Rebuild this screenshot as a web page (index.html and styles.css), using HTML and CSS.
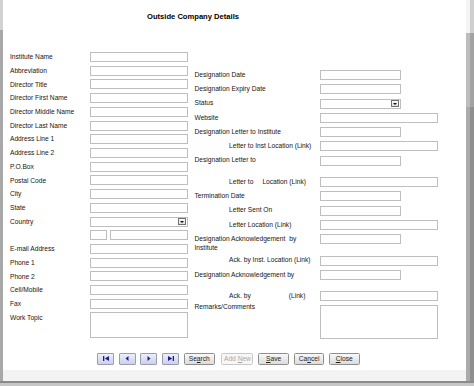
FILE: index.html
```html
<!DOCTYPE html>
<html>
<head>
<meta charset="utf-8">
<link rel="stylesheet" href="styles.css">
</head>
<body>
<div class="window">
  <div class="lborder"></div>
  <div class="content">
    <div class="title">Outside Company Details</div>
    <div class="form">
      <div class="left">
        <div class="lrow"><span class="lbl">Institute Name</span><span class="box w98"></span></div>
        <div class="lrow"><span class="lbl">Abbreviation</span><span class="box w98"></span></div>
        <div class="lrow"><span class="lbl">Director Title</span><span class="box w98"></span></div>
        <div class="lrow"><span class="lbl">Director First Name</span><span class="box w98"></span></div>
        <div class="lrow"><span class="lbl">Director Middle Name</span><span class="box w98"></span></div>
        <div class="lrow"><span class="lbl">Director Last Name</span><span class="box w98"></span></div>
        <div class="lrow"><span class="lbl">Address Line 1</span><span class="box w98"></span></div>
        <div class="lrow"><span class="lbl">Address Line 2</span><span class="box w98"></span></div>
        <div class="lrow"><span class="lbl">P.O.Box</span><span class="box w98"></span></div>
        <div class="lrow"><span class="lbl">Postal Code</span><span class="box w98"></span></div>
        <div class="lrow"><span class="lbl">City</span><span class="box w98"></span></div>
        <div class="lrow"><span class="lbl">State</span><span class="box w98"></span></div>
        <div class="lrow"><span class="lbl">Country</span><span class="box w98 select"><span class="dd"><span class="tri"></span></span></span></div>
        <div class="lrow"><span class="lbl"></span><span class="box w17"></span><span class="box w78"></span></div>
        <div class="lrow"><span class="lbl">E-mail Address</span><span class="box w98"></span></div>
        <div class="lrow"><span class="lbl">Phone 1</span><span class="box w98"></span></div>
        <div class="lrow"><span class="lbl">Phone 2</span><span class="box w98"></span></div>
        <div class="lrow"><span class="lbl">Cell/Mobile</span><span class="box w98"></span></div>
        <div class="lrow"><span class="lbl">Fax</span><span class="box w98"></span></div>
        <div class="lrow ltall"><span class="lbl">Work Topic</span><span class="box w98 area"></span></div>
      </div>
      <div class="right">
        <div class="rrow"><span class="lbl">Designation Date</span><span class="box short"></span></div>
        <div class="rrow"><span class="lbl">Designation Expiry Date</span><span class="box short"></span></div>
        <div class="rrow"><span class="lbl">Status</span><span class="box short select"><span class="dd"><span class="tri"></span></span></span></div>
        <div class="rrow"><span class="lbl">Website</span><span class="box long"></span></div>
        <div class="rrow"><span class="lbl">Designation Letter to Institute</span><span class="box short"></span></div>
        <div class="rrow"><span class="lbl ind">Letter to Inst Location (Link)</span><span class="box long"></span></div>
        <div class="rrow tall"><span class="lbl">Designation Letter to</span><span class="box short"></span></div>
        <div class="rrow"><span class="lbl ind">Letter to<span class="gap9"></span>Location (Link)</span><span class="box long"></span></div>
        <div class="rrow"><span class="lbl">Termination Date</span><span class="box short"></span></div>
        <div class="rrow"><span class="lbl ind">Letter Sent On</span><span class="box short"></span></div>
        <div class="rrow"><span class="lbl ind">Letter Location (Link)</span><span class="box long"></span></div>
        <div class="rrow tall"><span class="lbl">Designation Acknowledgement<span class="gap4"></span>by<br>Institute</span><span class="box short"></span></div>
        <div class="rrow"><span class="lbl ind">Ack. by Inst. Location (Link)</span><span class="box long"></span></div>
        <div class="rrow tall"><span class="lbl">Designation Acknowledgement by</span><span class="box short"></span></div>
        <div class="rrow"><span class="lbl ind">Ack. by<span class="gap38"></span>(Link)</span><span class="box long"></span></div>
        <div class="rrow remarks"><span class="lbl">Remarks/Comments</span><span class="box long area2"></span></div>
      </div>
    </div>
    <div class="buttons">
      <span class="nav"><svg width="6" height="5" viewBox="0 0 6 5"><rect x="0" y="0" width="1.3" height="5" fill="#1b1b9a"/><polygon points="6,0 6,5 1.8,2.5" fill="#1b1b9a"/></svg></span>
      <span class="nav"><svg width="4" height="5" viewBox="0 0 4 5"><polygon points="3.5,0 3.5,5 0.5,2.5" fill="#1b1b9a"/></svg></span>
      <span class="nav"><svg width="4" height="5" viewBox="0 0 4 5"><polygon points="0.5,0 0.5,5 3.5,2.5" fill="#1b1b9a"/></svg></span>
      <span class="nav"><svg width="6" height="5" viewBox="0 0 6 5"><polygon points="0,0 0,5 4.2,2.5" fill="#1b1b9a"/><rect x="4.7" y="0" width="1.3" height="5" fill="#1b1b9a"/></svg></span>
      <span class="btn w31"><span>Se<u>a</u>rch</span></span>
      <span class="btn w32 disabled"><span>Add <u>N</u>ew</span></span>
      <span class="btn w31"><span><u>S</u>ave</span></span>
      <span class="btn w30"><span>Ca<u>n</u>cel</span></span>
      <span class="btn w30"><span><u>C</u>lose</span></span>
    </div>
    <div class="spacer"></div>
    <div class="footer"></div>
  </div>
  <div class="rborder"><div class="rin"></div><div class="rout"></div></div>
</div>
<div class="bottom"></div>
</body>
</html>
```
FILE: styles.css
```css
* { box-sizing: border-box; }
html, body { margin: 0; padding: 0; }
body {
  width: 474px;
  height: 386px;
  overflow: hidden;
  background: #fff;
  font-family: "Liberation Sans", Arial, sans-serif;
  font-size: 6.65px;
  color: #151515;
}
.window { display: flex; height: 381px; }
.lborder {
  width: 3px;
  background: linear-gradient(to bottom, #d2d2d2 0, #d2d2d2 30px, #a8a8a8 30px);
}
.content { flex: 1; display: flex; flex-direction: column; }
.rborder { width: 8px; display: flex; }
.rin { width: 4px; background: linear-gradient(to bottom, #f4f4f4 0, #f4f4f4 33px, #bdbdbd 33px, #bdbdbd 107px, #ababab 107px); }
.rout { width: 4px; background: linear-gradient(to bottom, #cfcfcf 0, #cfcfcf 33px, #a2a2a2 33px, #a2a2a2 107px, #8f8f8f 107px); }
.bottom { height: 5px; background: linear-gradient(to bottom, #8a8a8a 0, #8a8a8a 2px, #c6c6c6 2px); }

.title {
  margin-top: 12px;
  padding-left: 144px;
  height: 10px;
  line-height: 10px;
  font-size: 7.6px;
  font-weight: bold;
  color: #000;
}
.form { display: flex; margin-top: 28.1px; }
.left { width: 185px; padding-left: 7px; }
.right { margin-left: 6.5px; padding-top: 17.75px; }

.box {
  display: block;
  flex: none;
  height: 10px;
  border: 1px solid #bebebe;
  background: #fff;
}
.lrow { display: flex; align-items: center; height: 13.72px; }
.lrow .lbl { width: 80px; line-height: 13.72px; white-space: nowrap; }
.w98 { width: 98px; }
.w17 { width: 17px; }
.w78 { width: 78px; margin-left: 3px; }
.ltall { height: 28.5px; align-items: flex-start; }
.ltall .box { margin-top: 1.6px; }
.area { height: 26px; }

.rrow { display: flex; align-items: flex-start; height: 14.3px; }
.rrow .lbl { width: 125.5px; line-height: 8.7px; padding-top: 2.8px; white-space: nowrap; }
.rrow .box { margin-top: 2.15px; }
.rrow.tall { height: 21.3px; }
.ind { padding-left: 34.5px; }
.short { width: 81px; }
.long { width: 118px; }
.gap9 { display: inline-block; width: 9px; }
.gap4 { display: inline-block; width: 4px; }
.gap38 { display: inline-block; width: 38px; }
.rrow.remarks { height: 36px; }
.remarks .lbl { padding-top: 0; }
.rrow .area2 { margin-top: 1.7px; height: 34.3px; }

.select { display: flex; justify-content: flex-end; align-items: center; padding-right: 0.7px; }
.dd {
  width: 8px;
  height: 7.6px;
  border: 1px solid #707070;
  background: linear-gradient(to bottom, #fafafa, #dedede);
  display: flex;
  align-items: center;
  justify-content: center;
}
.tri {
  width: 0; height: 0;
  border-left: 2px solid transparent;
  border-right: 2px solid transparent;
  border-top: 2px solid #111;
}

.buttons { display: flex; gap: 4.7px; margin-top: 13.7px; padding-left: 94px; height: 12px; }
.nav {
  width: 17px;
  height: 12px;
  border: 1px solid #9a9cb0;
  border-radius: 1px;
  background: linear-gradient(to bottom, #eceef9, #cdd1ea);
  display: flex;
  align-items: center;
  justify-content: center;
}
.btn {
  height: 12px;
  border: 1px solid #8e8e8e;
  border-radius: 1.5px;
  background: linear-gradient(to bottom, #f8f8f8, #dcdcdc);
  display: flex;
  align-items: center;
  justify-content: center;
  color: #222;
  line-height: 10px;
  white-space: nowrap;
}
.btn u { text-decoration-thickness: 0.6px; text-underline-offset: 1px; }
.w31 { width: 31px; }
.w32 { width: 32px; }
.w30 { width: 30.5px; }
.disabled { margin-left: 2px; border-color: #c8c8c8; background: #f7f7f7; color: #a8a8a8; }
.spacer { flex: 1; }
.footer { height: 11px; background: #f3f3f3; }
```
